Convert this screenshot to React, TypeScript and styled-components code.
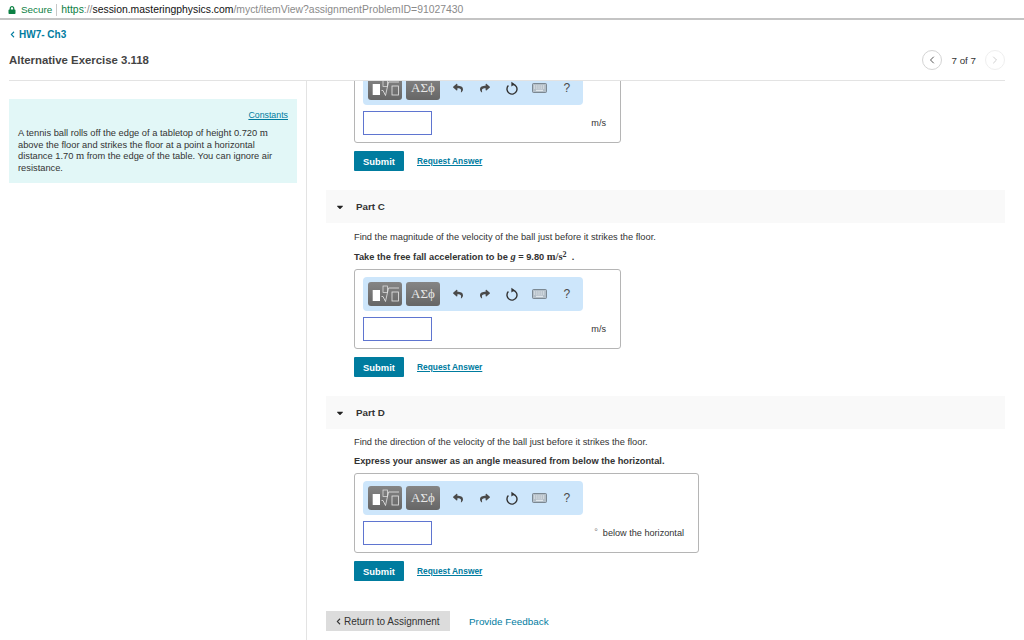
import React from 'react'
import styled, { createGlobalStyle } from 'styled-components'
import { FaReply, FaShare, FaChevronLeft, FaCaretDown, FaLock } from 'react-icons/fa'
import { ChevronLeft, ChevronRight } from 'lucide-react'

const GlobalStyle = createGlobalStyle`
  html, body {
    margin: 0;
    padding: 0;
    background: #fff;
  }
  body {
    font-family: "Liberation Sans", Arial, sans-serif;
    color: #333;
  }
`

const Page = styled.div`
  width: 1024px;
  height: 640px;
  overflow: hidden;
  display: flex;
  flex-direction: column;
`

const AddressBar = styled.div`
  flex: none;
  height: 17px;
  padding: 1px 0 0 8px;
  display: flex;
  align-items: center;
  border-bottom: 2px solid #c4c4c4;
  font-size: 10.4px;
  color: #8a8a8a;
`

const Secure = styled.span`
  display: flex;
  align-items: center;
  gap: 5px;
  font-size: 9.9px;
  color: #0b8043;
  padding-right: 4px;
  margin-right: 4px;
  border-right: 1px solid #c8c8c8;
  line-height: 12px;
`

const Green = styled.span`
  color: #0b8043;
`

const Host = styled.span`
  color: #111;
`

const PageHeader = styled.header`
  flex: none;
  margin: 0 19px 0 9px;
  height: 60px;
  border-bottom: 1px solid #e3e3e3;
  display: flex;
  flex-direction: column;
`

const BackLink = styled.a`
  display: flex;
  align-items: center;
  gap: 3px;
  margin-top: 8px;
  height: 12px;
  font-size: 10px;
  font-weight: 700;
  color: #007c9f;
`

const TitleRow = styled.div`
  display: flex;
  align-items: center;
  justify-content: space-between;
  margin-top: 9px;
  height: 22px;
`

const Title = styled.h1`
  margin: 0;
  font-size: 11.4px;
  font-weight: 700;
  color: #444;
`

const Pager = styled.div`
  display: flex;
  align-items: center;
  font-size: 9.8px;
  color: #333;
`

const PagerButton = styled.span<{ $off?: boolean }>`
  width: 20px;
  height: 20px;
  box-sizing: border-box;
  border-radius: 50%;
  display: flex;
  align-items: center;
  justify-content: center;
  border: 1px solid ${p => (p.$off ? '#efefef' : '#d4d4d4')};
  color: ${p => (p.$off ? '#cfcfcf' : '#555')};
`

const PagerLabel = styled.span`
  margin: 0 9px;
`

const Columns = styled.div`
  flex: 1;
  min-height: 0;
  display: flex;
`

const Sidebar = styled.aside`
  flex: none;
  width: 307px;
  box-sizing: border-box;
  padding: 18px 9px 0 9px;
  border-right: 1px solid #e3e3e3;
`

const InfoPanel = styled.div`
  background: #e2f7f7;
  height: 84px;
  box-sizing: border-box;
  padding: 11px 9px 0 9px;
  font-size: 9.3px;
  line-height: 11.6px;
  color: #333;
`

const ConstantsLink = styled.a`
  display: block;
  text-align: right;
  font-size: 8.8px;
  color: #007c9f;
  text-decoration: underline;
  margin-bottom: 6.5px;
`

const Serif = styled.span`
  font-family: "Liberation Serif", "DejaVu Serif", serif;
  font-size: 10.5px;
  line-height: 0;
`

const Main = styled.main`
  flex: 1;
  min-width: 0;
  overflow: hidden;
  padding: 0 19px 0 19px;
`

const Scroller = styled.div`
  margin-top: -24px;
`

const PartBody = styled.div`
  padding-left: 28px;
`

const PartHeader = styled.div`
  height: 33px;
  background: #f9f9f9;
  display: flex;
  align-items: center;
  margin-top: 19px;
  padding-left: 9px;
  font-size: 9.8px;
  font-weight: 700;
  color: #333;
`

const Caret = styled.span`
  display: flex;
  width: 21px;
  color: #222;
`

const Prompt = styled.p<{ $tall?: boolean; $strong?: boolean }>`
  margin: 0;
  padding-top: ${p => (p.$tall ? '8px' : '7px')};
  font-size: 9.27px;
  line-height: 12px;
  font-weight: ${p => (p.$strong ? 700 : 400)};
  color: #333;
`

const Sup = styled.sup`
  font-size: 8px;
  line-height: 0;
  vertical-align: 3px;
`

const AnswerBox = styled.div<{ $width: number }>`
  width: ${p => p.$width}px;
  height: 80px;
  box-sizing: border-box;
  margin-top: 6px;
  padding: 7px 14px 0 8px;
  border: 1px solid #b5b5b5;
  border-radius: 3px;
`

const Toolbar = styled.div`
  width: 220px;
  height: 34px;
  box-sizing: border-box;
  padding: 5px 0 0 5px;
  background: #cde6fb;
  border-radius: 4px;
  display: flex;
  align-items: flex-start;
  gap: 4px;
`

const MathButton = styled.span`
  width: 34px;
  height: 24px;
  flex: none;
  border-radius: 3px;
  background: linear-gradient(#858585, #666);
  color: #e8e8e8;
  display: flex;
  align-items: center;
  justify-content: center;
  font-family: "Liberation Serif", "DejaVu Serif", serif;
  font-size: 13px;
`

const ToolIcon = styled.span`
  width: 27.3px;
  height: 24px;
  flex: none;
  display: flex;
  align-items: center;
  justify-content: center;
  color: #4a4a4a;
  font-size: 12px;
`

const ToolIcons = styled.div`
  display: flex;
`

const AnswerRow = styled.div`
  display: flex;
  align-items: center;
  justify-content: space-between;
  margin-top: 6px;
`

const AnswerInput = styled.input`
  width: 69px;
  height: 24px;
  box-sizing: border-box;
  border: 1px solid #5f75d0;
  background: #fff;
  padding: 0;
  outline: none;
`

const Unit = styled.span`
  font-size: 9.15px;
  color: #333;
`

const Degree = styled.span`
  color: #777;
  margin-right: 5px;
  position: relative;
  top: -1px;
`

const ActionRow = styled.div`
  display: flex;
  align-items: center;
  margin-top: 8px;
  height: 20px;
`

const SubmitButton = styled.button`
  width: 50px;
  height: 20px;
  padding: 0;
  border: none;
  border-radius: 1px;
  background: #007c9f;
  color: #fff;
  font-family: inherit;
  font-size: 9.4px;
  font-weight: 700;
`

const RequestLink = styled.a`
  margin: -1px 0 0 13px;
  font-size: 8.4px;
  font-weight: 700;
  color: #007c9f;
  text-decoration: underline;
`

const Footer = styled.div`
  display: flex;
  align-items: center;
  margin-top: 30px;
`

const ReturnButton = styled.button`
  width: 124px;
  height: 20px;
  padding: 0 0 0 9px;
  display: flex;
  align-items: center;
  gap: 2px;
  border: none;
  background: #dcdcdc;
  color: #333;
  font-family: inherit;
  font-size: 10px;
`

const FeedbackLink = styled.a`
  margin-left: 19px;
  font-size: 9.9px;
  color: #007c9f;
`

function RadicalIcon() {
  return (
    <svg width="30" height="20" viewBox="0 0 30 20" fill="none">
      <rect x="2.7" y="6" width="7.3" height="11" fill="#fff" />
      <path d="M11.5 12.5h1.5l2.5 5 3-13.5h10.5" stroke="#e8e8e8" strokeWidth="0.8" />
      <rect x="13" y="2" width="4.5" height="6.5" stroke="#e8e8e8" strokeWidth="0.7" />
      <rect x="22" y="8" width="6.5" height="9" stroke="#e8e8e8" strokeWidth="0.8" />
    </svg>
  )
}

function ResetIcon() {
  return (
    <svg width="14" height="14" viewBox="0 0 14 14" fill="none">
      <path d="M8 3.2A5 5 0 1 1 3.4 4.6" stroke="#333" strokeWidth="1.4" />
      <path d="M6.4 0.8L9.8 3.2 6.4 5.6z" fill="#333" />
    </svg>
  )
}

function KeyboardIcon() {
  return (
    <svg width="15" height="10" viewBox="0 0 15 10">
      <rect x="0.5" y="0.5" width="14" height="9" rx="1" fill="#b4bfc8" stroke="#6a757d" strokeWidth="0.8" />
      <path d="M2 3h11M2 5h11" stroke="#f2f5f7" strokeWidth="0.9" strokeDasharray="1 0.8" />
      <path d="M4 7.3h7" stroke="#f2f5f7" strokeWidth="0.9" />
    </svg>
  )
}

type AnswerBlockProps = {
  width: number
  children: React.ReactNode
}

function AnswerBlock({ width, children }: AnswerBlockProps) {
  return (
    <>
      <AnswerBox $width={width}>
        <Toolbar>
          <MathButton><RadicalIcon /></MathButton>
          <MathButton>ΑΣϕ</MathButton>
          <ToolIcons>
            <ToolIcon><FaReply size={10} /></ToolIcon>
            <ToolIcon><FaShare size={10} /></ToolIcon>
            <ToolIcon><ResetIcon /></ToolIcon>
            <ToolIcon><KeyboardIcon /></ToolIcon>
            <ToolIcon>?</ToolIcon>
          </ToolIcons>
        </Toolbar>
        <AnswerRow>
          <AnswerInput />
          <Unit>{children}</Unit>
        </AnswerRow>
      </AnswerBox>
      <ActionRow>
        <SubmitButton>Submit</SubmitButton>
        <RequestLink>Request Answer</RequestLink>
      </ActionRow>
    </>
  )
}

export default function App() {
  return (
    <Page>
      <GlobalStyle />
      <AddressBar>
        <Secure><FaLock size={8} />Secure</Secure>
        <span><Green>https</Green>://<Host>session.masteringphysics.com</Host>/myct/itemView?assignmentProblemID=91027430</span>
      </AddressBar>
      <PageHeader>
        <BackLink><FaChevronLeft size={7} />HW7- Ch3</BackLink>
        <TitleRow>
          <Title>Alternative Exercise 3.118</Title>
          <Pager>
            <PagerButton><ChevronLeft size={12} /></PagerButton>
            <PagerLabel>7 of 7</PagerLabel>
            <PagerButton $off><ChevronRight size={12} /></PagerButton>
          </Pager>
        </TitleRow>
      </PageHeader>
      <Columns>
        <Sidebar>
          <InfoPanel>
            <ConstantsLink>Constants</ConstantsLink>
            A tennis ball rolls off the edge of a tabletop of height 0.720 <Serif>m</Serif> above the floor and strikes the floor at a point a horizontal distance 1.70 <Serif>m</Serif> from the edge of the table. You can ignore air resistance.
          </InfoPanel>
        </Sidebar>
        <Main>
          <Scroller>
            <PartBody>
              <AnswerBlock width={267}>m/s</AnswerBlock>
            </PartBody>
            <PartHeader><Caret><FaCaretDown size={10} /></Caret>Part C</PartHeader>
            <PartBody>
              <Prompt $tall>Find the magnitude of the velocity of the ball just before it strikes the floor.</Prompt>
              <Prompt $tall $strong>
                Take the free fall acceleration to be <Serif as="i">g</Serif> = 9.80 <Serif>m/s<Sup>2</Sup></Serif>&nbsp; .
              </Prompt>
              <AnswerBlock width={267}>m/s</AnswerBlock>
            </PartBody>
            <PartHeader><Caret><FaCaretDown size={10} /></Caret>Part D</PartHeader>
            <PartBody>
              <Prompt>Find the direction of the velocity of the ball just before it strikes the floor.</Prompt>
              <Prompt $strong>Express your answer as an angle measured from below the horizontal.</Prompt>
              <AnswerBlock width={345}><Degree>°</Degree>below the horizontal</AnswerBlock>
            </PartBody>
            <Footer>
              <ReturnButton><FaChevronLeft size={7} />Return to Assignment</ReturnButton>
              <FeedbackLink>Provide Feedback</FeedbackLink>
            </Footer>
          </Scroller>
        </Main>
      </Columns>
    </Page>
  )
}
